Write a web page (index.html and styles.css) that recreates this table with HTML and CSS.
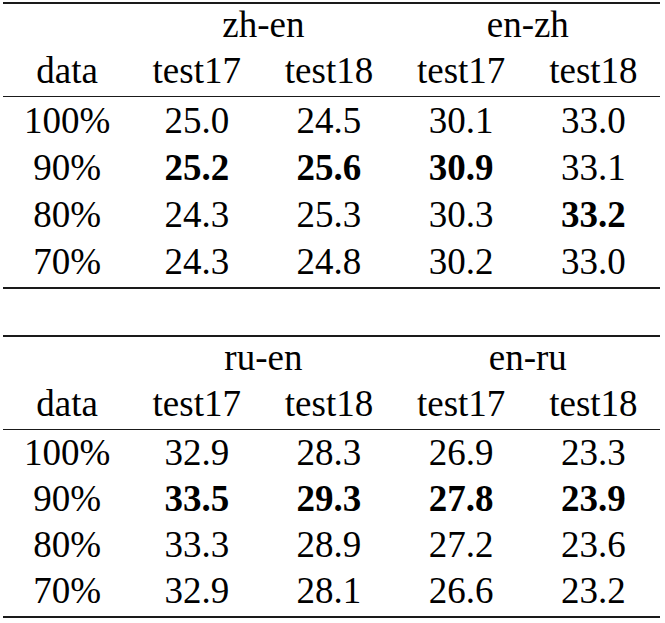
FILE: index.html
```html
<!DOCTYPE html>
<html lang="en">
<head>
  <meta charset="UTF-8" />
  <meta name="viewport" content="width=device-width, initial-scale=1.0"/>
  <title>BLEU by data fraction</title>
  <link rel="stylesheet" href="styles.css">
</head>
<body>
  <table class="results">
    <colgroup>
      <col class="c-data"><col class="c-a"><col class="c-b"><col class="c-a"><col class="c-b">
    </colgroup>
    <thead>
      <tr class="pair-row">
        <th></th>
        <th colspan="2">zh-en</th>
        <th colspan="2">en-zh</th>
      </tr>
      <tr class="set-row">
        <th>data</th>
        <th>test17</th>
        <th>test18</th>
        <th>test17</th>
        <th>test18</th>
      </tr>
    </thead>
    <tbody>
      <tr><td>100%</td><td>25.0</td><td>24.5</td><td>30.1</td><td>33.0</td></tr>
      <tr><td>90%</td><td class="best">25.2</td><td class="best">25.6</td><td class="best">30.9</td><td>33.1</td></tr>
      <tr><td>80%</td><td>24.3</td><td>25.3</td><td>30.3</td><td class="best">33.2</td></tr>
      <tr><td>70%</td><td>24.3</td><td>24.8</td><td>30.2</td><td>33.0</td></tr>
    </tbody>
  </table>

  <table class="results">
    <colgroup>
      <col class="c-data"><col class="c-a"><col class="c-b"><col class="c-a"><col class="c-b">
    </colgroup>
    <thead>
      <tr class="pair-row">
        <th></th>
        <th colspan="2">ru-en</th>
        <th colspan="2">en-ru</th>
      </tr>
      <tr class="set-row">
        <th>data</th>
        <th>test17</th>
        <th>test18</th>
        <th>test17</th>
        <th>test18</th>
      </tr>
    </thead>
    <tbody>
      <tr><td>100%</td><td>32.9</td><td>28.3</td><td>26.9</td><td>23.3</td></tr>
      <tr><td>90%</td><td class="best">33.5</td><td class="best">29.3</td><td class="best">27.8</td><td class="best">23.9</td></tr>
      <tr><td>80%</td><td>33.3</td><td>28.9</td><td>27.2</td><td>23.6</td></tr>
      <tr><td>70%</td><td>32.9</td><td>28.1</td><td>26.6</td><td>23.2</td></tr>
    </tbody>
  </table>
</body>
</html>
```

FILE: styles.css
```css
body {
  font-family: 'Liberation Serif', 'Times New Roman', serif;
  background-color: #fff;
  color: #000;
  margin: 0;
  padding: 2px 0 0 3px;
}

.results {
  width: 657px;
  table-layout: fixed;
  border-collapse: separate;
  border-spacing: 0;
  font-family: 'Liberation Serif', 'Times New Roman', serif;
  font-size: 37px;
}

.results + .results {
  margin-top: 46px;
}

.c-data { width: 128px; }
.c-a { width: 131px; }
.c-b { width: 133px; }

.results th,
.results td {
  padding: 0;
  font-family: 'Liberation Serif', 'Times New Roman', serif;
  text-align: center;
  font-weight: normal;
  white-space: nowrap;
}

.results th {
  line-height: 42px;
  padding-bottom: 4px;
}

.pair-row th {
  border-top: 2px solid #1a1a1a;
}

.set-row th {
  border-bottom: 1px solid #1a1a1a;
}

.results td {
  line-height: 47px;
}

.results + .results td {
  line-height: 46px;
}

.results tbody tr:last-child td {
  padding-bottom: 2px;
  border-bottom: 2px solid #1a1a1a;
}

.results td.best {
  font-weight: bold;
}
```
